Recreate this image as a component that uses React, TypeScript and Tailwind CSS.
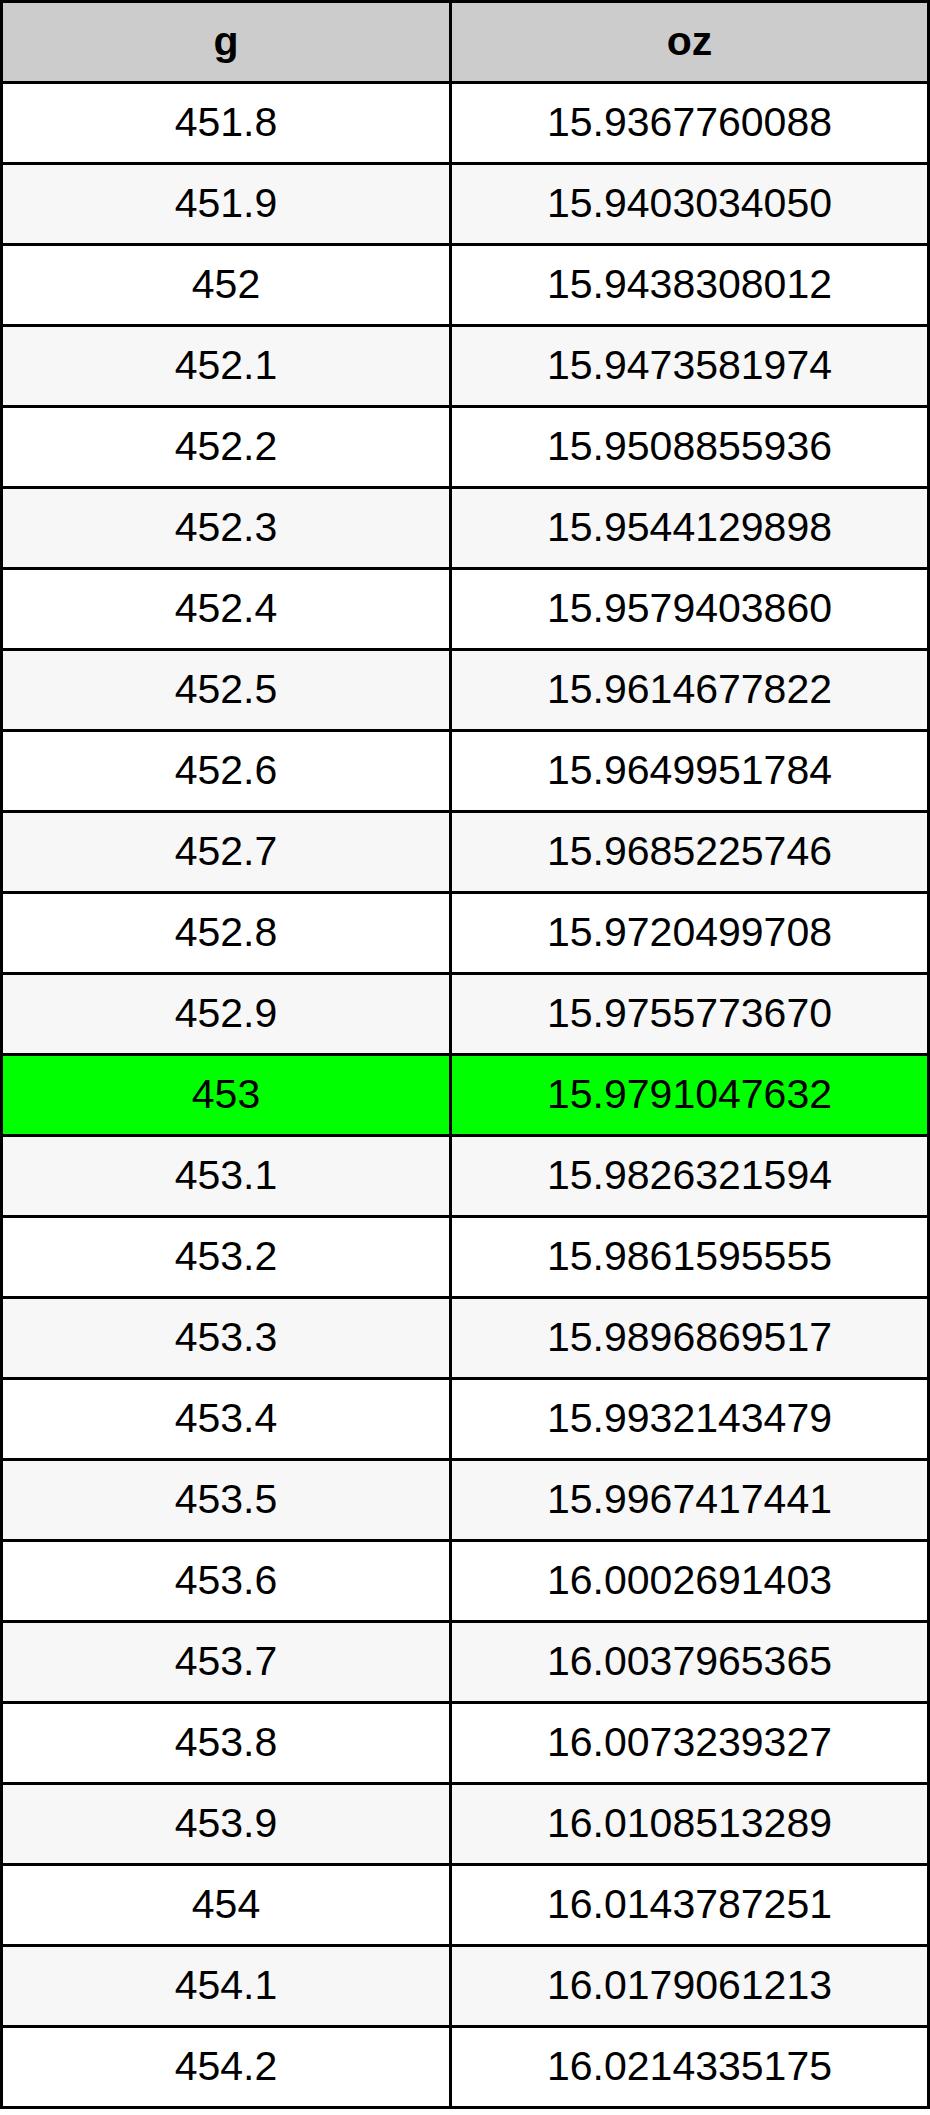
const rows: [string, string][] = [
  ['451.8', '15.9367760088'],
  ['451.9', '15.9403034050'],
  ['452', '15.9438308012'],
  ['452.1', '15.9473581974'],
  ['452.2', '15.9508855936'],
  ['452.3', '15.9544129898'],
  ['452.4', '15.9579403860'],
  ['452.5', '15.9614677822'],
  ['452.6', '15.9649951784'],
  ['452.7', '15.9685225746'],
  ['452.8', '15.9720499708'],
  ['452.9', '15.9755773670'],
  ['453', '15.9791047632'],
  ['453.1', '15.9826321594'],
  ['453.2', '15.9861595555'],
  ['453.3', '15.9896869517'],
  ['453.4', '15.9932143479'],
  ['453.5', '15.9967417441'],
  ['453.6', '16.0002691403'],
  ['453.7', '16.0037965365'],
  ['453.8', '16.0073239327'],
  ['453.9', '16.0108513289'],
  ['454', '16.0143787251'],
  ['454.1', '16.0179061213'],
  ['454.2', '16.0214335175'],
]

// Grams to ounces conversion table, 453 g row highlighted.
export default function App() {
  return (
    <div className="w-[930px] bg-white font-['Liberation_Sans',Arial,sans-serif] text-black">
      <div className="border-[3px] border-black">
        <div className="flex h-[78px] bg-[#cccccc] text-[41px] font-bold">
          <div className="flex w-[449px] items-center justify-center border-r-[3px] border-black">g</div>
          <div className="flex flex-1 items-center justify-center">oz</div>
        </div>
        {rows.map(([g, oz], i) => {
          const bg = g === '453' ? 'bg-[#00ff00]' : i % 2 === 0 ? 'bg-white' : 'bg-[#f7f7f7]'
          return (
            <div key={g} className={`flex h-[81px] border-t-[3px] border-black text-[41px] ${bg}`}>
              <div className="flex w-[449px] items-center justify-center border-r-[3px] border-black">{g}</div>
              <div className="flex flex-1 items-center justify-center">{oz}</div>
            </div>
          )
        })}
      </div>
    </div>
  )
}
